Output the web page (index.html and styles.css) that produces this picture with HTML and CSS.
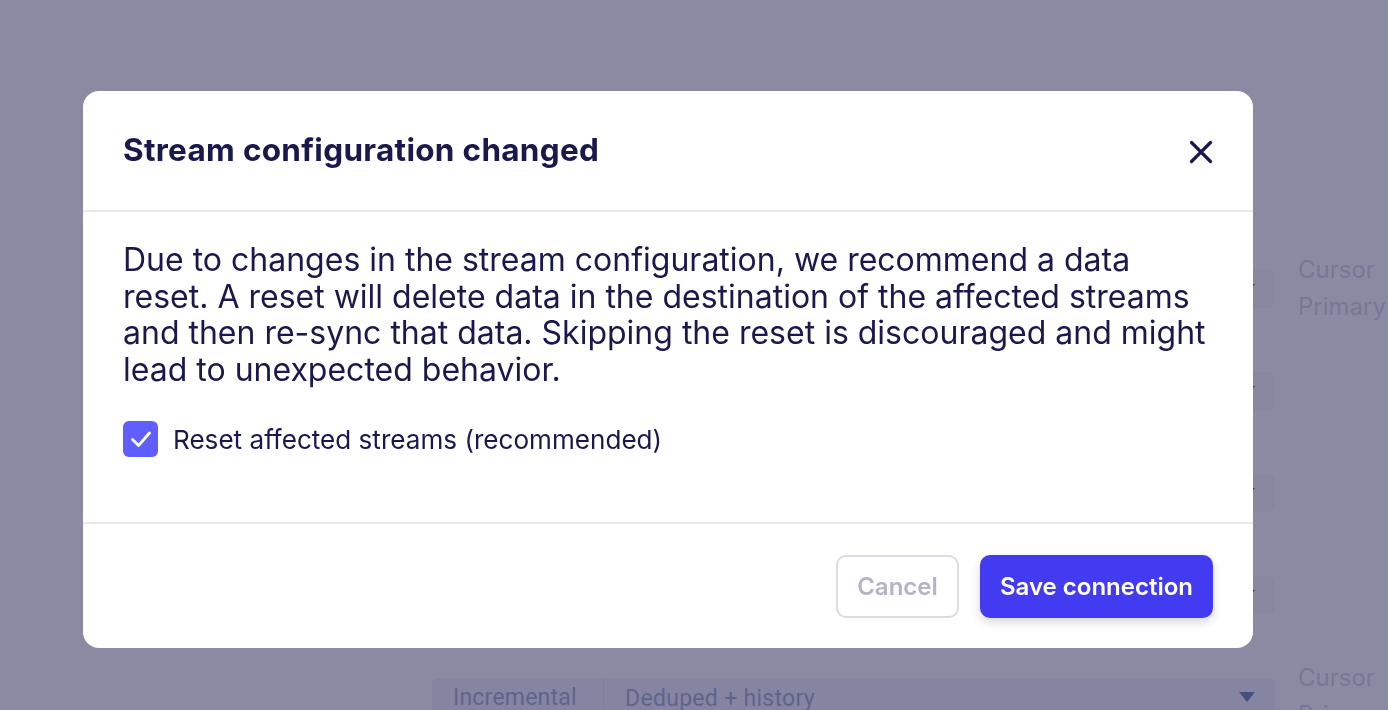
FILE: index.html
```html
<!DOCTYPE html>
<html lang="en">
<head>
<meta charset="utf-8">
<title>Stream configuration changed</title>
<link rel="stylesheet" href="styles.css">
</head>
<body>
<div class="page">
  <div class="table">
    <div class="row">
      <div class="select select-hidden"><span class="caret"></span></div>
      <div class="cursor">Cursor<br>Primary</div>
    </div>
    <div class="row">
      <div class="select select-hidden"><span class="caret"></span></div>
      <div class="cursor"></div>
    </div>
    <div class="row">
      <div class="select select-hidden"><span class="caret"></span></div>
      <div class="cursor"></div>
    </div>
    <div class="row">
      <div class="select select-hidden"><span class="caret"></span></div>
      <div class="cursor"></div>
    </div>
    <div class="row">
      <div class="select"><span class="mode">Incremental</span><span class="sync">Deduped + history</span><span class="caret"></span></div>
      <div class="cursor">Cursor<br>Primary</div>
    </div>
  </div>
</div>
<div class="overlay">
  <div class="modal">
    <div class="modal-header">
      <h1 class="title">Stream configuration changed</h1>
      <button class="close" aria-label="Close">
        <svg width="24" height="24" viewBox="0 0 24 24"><path d="M2.5 2.5 L21.5 21.5 M21.5 2.5 L2.5 21.5" stroke="#1a194d" stroke-width="3.2" stroke-linecap="round" fill="none"/></svg>
      </button>
    </div>
    <div class="modal-body">
      <p class="message">Due to changes in the stream configuration, we recommend a data reset. A reset will delete data in the destination of the affected streams and then re-sync that data. Skipping the reset is discouraged and might lead to unexpected behavior.</p>
      <label class="check-row">
        <span class="checkbox">
          <svg width="24" height="24" viewBox="0 0 24 24"><path d="M3.5 12.5 L9.5 18.5 L20.5 6" stroke="#fff" stroke-width="2.8" stroke-linecap="round" stroke-linejoin="round" fill="none"/></svg>
        </span>
        <span class="check-label">Reset affected streams (recommended)</span>
      </label>
    </div>
    <div class="modal-footer">
      <button class="btn btn-cancel">Cancel</button>
      <button class="btn btn-save">Save connection</button>
    </div>
  </div>
</div>
</body>
</html>
```
FILE: styles.css
```css
html, body {
  margin: 0;
  padding: 0;
  width: 1388px;
  height: 710px;
  overflow: hidden;
  background: #ffffff;
  font-family: Inter, "Noto Sans", sans-serif;
}

.page {
  width: 1388px;
  height: 710px;
  overflow: hidden;
}

.table {
  padding-top: 237px;
  padding-left: 432px;
  display: flex;
  flex-direction: column;
}

.row {
  height: 102px;
  display: flex;
  align-items: center;
  flex-shrink: 0;
}

.select {
  width: 843px;
  height: 38px;
  margin-top: 2px;
  background: #f3f5fd;
  border-radius: 6px;
  display: flex;
  align-items: center;
  font-family: Roboto, sans-serif;
  font-size: 23px;
  color: #a7b2d0;
}

.select-hidden {
  justify-content: flex-end;
  background: #f9f9fc;
}

.mode {
  width: 150px;
  padding-left: 21px;
  border-right: 1px solid #e2e6f3;
  height: 38px;
  line-height: 40px;
  letter-spacing: 0.2px;
}

.sync {
  flex: 1;
  padding-left: 21px;
  padding-top: 2px;
  letter-spacing: 0.3px;
}

.caret {
  width: 0;
  height: 0;
  border-left: 8px solid transparent;
  border-right: 8px solid transparent;
  border-top: 10px solid #7088bb;
  margin-right: 20px;
}

.select-hidden .caret {
  border-top-color: #6c6d8e;
}

.cursor {
  margin-left: 23px;
  font-size: 24px;
  line-height: 37px;
  color: #d9d9e4;
  white-space: nowrap;
}

.overlay {
  position: fixed;
  inset: 0;
  background: rgba(24, 22, 72, 0.5);
  padding: 91px 0 0 83px;
}

.modal {
  width: 1170px;
  height: 557px;
  background: #ffffff;
  border-radius: 16px;
  display: flex;
  flex-direction: column;
  overflow: hidden;
}

.modal-header {
  height: 119px;
  border-bottom: 2px solid #e8e8ee;
  display: flex;
  align-items: center;
  justify-content: space-between;
  padding: 0 40px;
  flex-shrink: 0;
}

.title {
  margin: 0;
  font-size: 31.5px;
  line-height: 38px;
  font-weight: 700;
  color: #1a194d;
  letter-spacing: 0.3px;
  position: relative;
  top: -1px;
}

.close {
  background: none;
  border: 0;
  padding: 0;
  width: 24px;
  height: 24px;
  margin-right: 0;
  margin-top: 2px;
  cursor: pointer;
}

.modal-body {
  padding: 30px 40px 0 40px;
  height: 280px;
  flex-shrink: 0;
}

.message {
  margin: 0;
  font-size: 32px;
  line-height: 36.5px;
  color: #1a194d;
}

.check-row {
  margin-top: 33px;
  display: flex;
  align-items: center;
}

.checkbox {
  width: 35px;
  height: 36px;
  border-radius: 6px;
  background: #615eff;
  display: flex;
  align-items: center;
  justify-content: center;
}

.check-label {
  margin-left: 15px;
  font-size: 26.1px;
  color: #1a194d;
}

.modal-footer {
  flex: 1;
  border-top: 2px solid #e8e8ee;
  display: flex;
  align-items: center;
  justify-content: flex-end;
  gap: 21px;
  padding: 0 40px 0 0;
}

.btn {
  font-family: Inter, "Noto Sans", sans-serif;
  font-size: 24px;
  font-weight: 600;
  border-radius: 10px;
  height: 63px;
  cursor: pointer;
}

.btn-cancel {
  width: 123px;
  background: #ffffff;
  border: 2px solid #dcdce4;
  color: #b4b4c6;
}

.btn-save {
  width: 233px;
  background: #433bf1;
  border: 0;
  color: #ffffff;
  box-shadow: 0 4px 10px rgba(26, 25, 77, 0.18);
}
```
